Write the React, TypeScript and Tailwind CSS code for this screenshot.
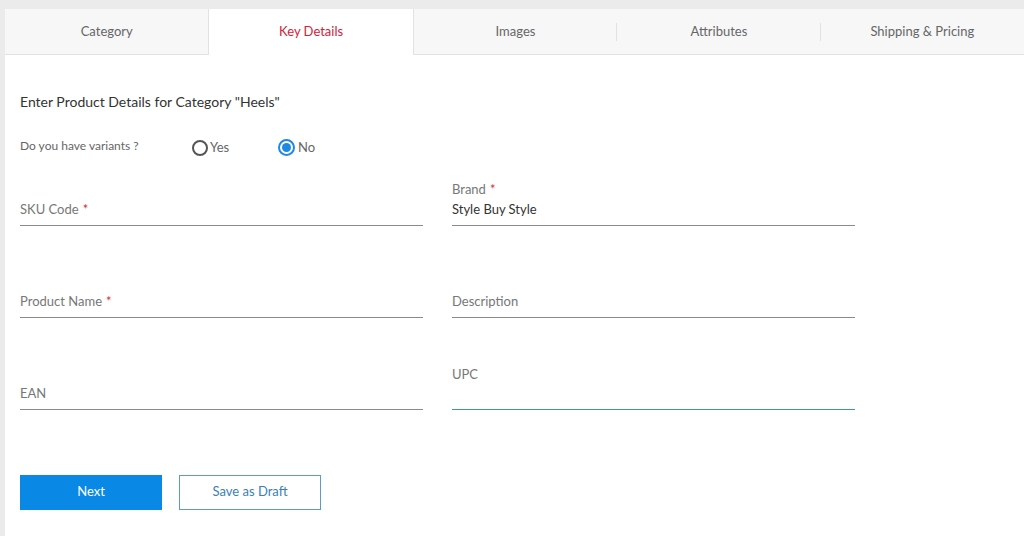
import React from "react";

const Field = ({ label, req, value, focused }: { label: string; req?: boolean; value?: string; focused?: boolean }) => (
  <div className={focused ? "w-[403px] h-[92px] flex flex-col justify-end border-b border-b-[#3a8fd6]" : "w-[403px] h-[92px] flex flex-col justify-end border-b border-b-[#8a8a8a]"}>
    {value ? (
      <>
        <div className="text-[13px] text-[#777] leading-4 mb-[4px]">{label}{req && <span className="text-[#d32f2f] ml-1">*</span>}</div>
        <div className="text-[13px] text-[#333] leading-4 mb-[8px]">{value}</div>
      </>
    ) : focused ? (
      <div className="text-[13px] text-[#777] leading-4 mb-[27px]">{label}</div>
    ) : (
      <div className="text-[13px] text-[#777] leading-4 mb-[8px]">{label}{req && <span className="text-[#d32f2f] ml-1">*</span>}</div>
    )}
  </div>
);

export default function App() {
  const tabs = ["Category", "Key Details", "Images", "Attributes", "Shipping & Pricing"];
  return (
    <div className="w-[1024px] h-[536px] bg-[#ebebeb] pt-[9px] pl-[5px] overflow-hidden" style={{ fontFamily: "Lato, 'Open Sans', sans-serif" }}>
      <div className="bg-white h-full">
        <div className="flex h-[46px]">
          {tabs.map((t, i) => (
            <div key={t} className={`flex-1 flex items-center justify-center text-[13px] relative ${i === 1 ? "bg-white text-[#d0233b] border-l border-r border-[#e2e2e2]" : "bg-[#f7f7f7] text-[#666] border-b border-[#e2e2e2]"}`}>
              {t}
              {(i === 2 || i === 3) && <div className="absolute right-0 top-[14px] h-[18px] w-px bg-[#e2e2e2]" />}
            </div>
          ))}
        </div>
        <div className="pl-[15px]">
          <div className="mt-[36px] text-[14px] text-[#333]">Enter Product Details for Category "Heels"</div>
          <div className="flex items-center mt-[22px] text-[12px] text-[#666]">
            <span className="w-[172px]">Do you have variants ?</span>
            <span className="flex items-center w-[86px] mt-[4px] text-[13px]"><span className="w-[16px] h-[16px] rounded-full border-2 border-[#555] mr-[2px]" />Yes</span>
            <span className="flex items-center mt-[4px] text-[13px]"><span className="w-[17px] h-[17px] rounded-full border-2 border-[#1e88e5] flex items-center justify-center mr-[3px]"><span className="w-[9px] h-[9px] rounded-full bg-[#1e88e5]" /></span>No</span>
          </div>
          <div className="grid grid-cols-[403px_403px] gap-x-[29px] mt-[-24px]">
            <Field label="SKU Code" req />
            <Field label="Brand" req value="Style Buy Style" />
            <Field label="Product Name" req />
            <Field label="Description" />
            <Field label="EAN" />
            <Field label="UPC" focused />
          </div>
          <div className="flex gap-[17px] mt-[65px]">
            <button className="w-[142px] h-[35px] bg-[#0a88e6] text-white text-[13px]">Next</button>
            <button className="w-[142px] h-[35px] border border-[#5a9bc8] text-[#3a7fb5] text-[13px]">Save as Draft</button>
          </div>
        </div>
      </div>
    </div>
  );
}
